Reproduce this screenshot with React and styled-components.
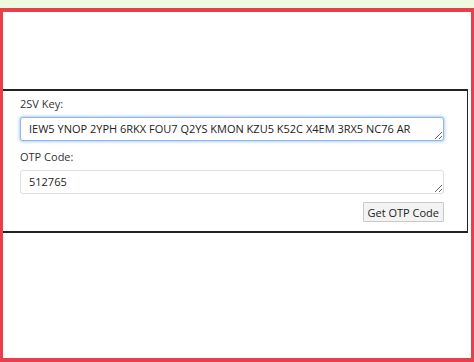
import React from "react";
import styled, { createGlobalStyle } from "styled-components";

const Global = createGlobalStyle`
  html, body { margin: 0; padding: 0; background: #ffffff; }
  body { font-family: "Open Sans", "Noto Sans", sans-serif; }
  * { box-sizing: border-box; }
`;

const Page = styled.div`
  display: flex;
  flex-direction: column;
  height: 362px;
  overflow: hidden;
`;

const TopStrip = styled.div`
  flex: 0 0 8px;
  background: #eefadf;
`;

const Frame = styled.div`
  flex: 1 1 auto;
  border: 3px solid #e8404a;
  border-top-width: 4px;
  border-bottom-width: 4px;
  background: #ffffff;
  padding-top: 77px;
  padding-right: 3px;
`;

const Card = styled.div`
  border: 1px solid #222;
  border-width: 2px 1px 2px 0;
  padding: 6px 23px 9px 17px;
  display: flex;
  flex-direction: column;
`;

const Label = styled.label`
  font-size: 11px;
  color: #333;
  line-height: 14px;
  margin-bottom: 6px;
`;

const Area = styled.textarea`
  display: block;
  width: 100%;
  height: 24px;
  resize: vertical;
  font-family: "Open Sans", "Noto Sans", sans-serif;
  font-size: 11px;
  line-height: 14px;
  color: #222;
  padding: 4px 8px;
  border-radius: 3px;
  border: 1px solid ${p => (p.$focus ? "#8cb6ec" : "#dedede")};
  box-shadow: ${p => (p.$focus ? "0 0 3px 1px rgba(120,170,240,0.55)" : "none")};
  outline: none;
  overflow: hidden;
  white-space: nowrap;
  margin-bottom: ${p => p.$mb}px;
`;

const Actions = styled.div`
  display: flex;
  justify-content: flex-end;
`;

const Button = styled.button`
  height: 20px;
  padding: 0 4px;
  font-family: "Open Sans", "Noto Sans", sans-serif;
  font-size: 11px;
  color: #222;
  background: #f3f3f3;
  border: 1px solid #c9c9c9;
  border-radius: 1px;
`;

export default function App() {
  return (
    <>
      <Global />
      <Page>
        <TopStrip />
        <Frame>
          <Card>
            <Label>2SV Key:</Label>
            <Area
              $focus
              $mb={9}
              defaultValue="IEW5 YNOP 2YPH 6RKX FOU7 Q2YS KMON KZU5 K52C X4EM 3RX5 NC76 AR"
            />
            <Label>OTP Code:</Label>
            <Area $mb={8} defaultValue="512765" />
            <Actions>
              <Button>Get OTP Code</Button>
            </Actions>
          </Card>
        </Frame>
      </Page>
    </>
  );
}
